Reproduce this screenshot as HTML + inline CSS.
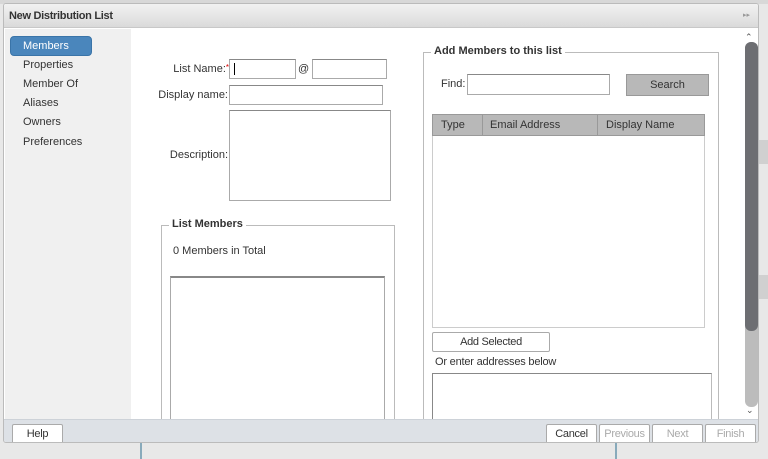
<!DOCTYPE html>
<html><head><style>
*{box-sizing:border-box;margin:0;padding:0}
body{width:768px;height:459px;overflow:hidden;background:#e8e8e8;font-family:"Liberation Sans",sans-serif;font-size:11px;color:#333;position:relative}
.a{position:absolute}
.inp{position:absolute;background:#fff;border:1px solid #aaa;border-top-color:#888}
.lbl{position:absolute;font-size:11px;color:#333;text-align:right}
.btn{position:absolute;background:#fff;border:1px solid #aaa;border-radius:2px;font-size:11px;text-align:center;color:#333;letter-spacing:-0.3px}
</style></head><body>
<div class="a" style="left:0;top:0;width:768px;height:4px;background:#d8d8d8"></div>
<div class="a" style="left:140px;top:443px;width:2px;height:16px;background:#8ab"></div>
<div class="a" style="left:615px;top:443px;width:2px;height:16px;background:#8ab"></div>
<div class="a" style="left:759px;top:140px;width:9px;height:24px;background:#d0d0d0"></div>
<div class="a" style="left:759px;top:275px;width:9px;height:24px;background:#d0d0d0"></div>
<!-- dialog -->
<div class="a" style="left:3px;top:3px;width:756px;height:440px;background:#fff;border:1px solid #bbb;border-radius:3px;overflow:hidden">
 <div class="a" style="left:0;top:0;width:756px;height:24px;background:linear-gradient(#f2f2f2,#dadada);border-bottom:1px solid #c8c8c8"></div>
 <div class="a" style="left:5px;top:6px;font-size:11px;font-weight:bold;color:#333;letter-spacing:-0.3px">New Distribution List</div>
 <div class="a" style="left:739px;top:7px;font-size:7px;color:#999">▸▸</div>
 <div class="a" style="left:1px;top:25px;width:126px;height:392px;background:#f0f0f0"></div>
 <div class="a" style="left:6px;top:32px;width:82px;height:20px;background:#4a86bc;border-radius:4px;border:1px solid #3a74a8"></div>
 <div class="a" style="left:19px;top:34px;color:#fff;line-height:16px">Members</div>
 <div class="a" style="left:19px;top:53px;line-height:16px;color:#333">Properties</div>
 <div class="a" style="left:19px;top:72px;line-height:16px">Member Of</div>
 <div class="a" style="left:19px;top:91px;line-height:16px">Aliases</div>
 <div class="a" style="left:19px;top:110px;line-height:16px">Owners</div>
 <div class="a" style="left:19px;top:130px;line-height:16px">Preferences</div>
 <!-- form -->
 <div class="lbl" style="left:120px;width:105px;top:59px">List Name:<span style="color:#d00;font-size:8px;vertical-align:top">*</span></div>
 <div class="inp" style="left:225px;top:55px;width:67px;height:20px"><div style="position:absolute;left:4px;top:3px;width:1px;height:12px;background:#000"></div></div>
 <div class="a" style="left:294px;top:59px">@</div>
 <div class="inp" style="left:308px;top:55px;width:75px;height:20px"></div>
 <div class="lbl" style="left:120px;width:104px;top:85px">Display name:</div>
 <div class="inp" style="left:225px;top:81px;width:154px;height:20px"></div>
 <div class="lbl" style="left:120px;width:104px;top:145px">Description:</div>
 <div class="inp" style="left:225px;top:106px;width:162px;height:91px"></div>
 <!-- list members -->
 <div class="a" style="left:157px;top:221px;width:234px;height:210px;border:1px solid #bbb"></div>
 <div class="a" style="left:165px;top:214px;background:#fff;padding:0 3px;font-weight:bold;font-size:11px">List Members</div>
 <div class="a" style="left:169px;top:241px">0 Members in Total</div>
 <div class="a" style="left:166px;top:272px;width:215px;height:160px;border:1px solid #aaa;border-top:2px solid #888"></div>
 <!-- add members -->
 <div class="a" style="left:419px;top:48px;width:296px;height:380px;border:1px solid #bbb"></div>
 <div class="a" style="left:427px;top:41px;background:#fff;padding:0 3px;font-weight:bold;font-size:11px">Add Members to this list</div>
 <div class="a" style="left:437px;top:74px">Find:</div>
 <div class="inp" style="left:463px;top:70px;width:143px;height:21px"></div>
 <div class="a" style="left:622px;top:70px;width:83px;height:22px;background:#b8b8b8;border:1px solid #999;text-align:center;line-height:20px">Search</div>
 <div class="a" style="left:428px;top:110px;width:273px;height:214px;border:1px solid #ccc"></div>
 <div class="a" style="left:428px;top:110px;width:273px;height:22px;background:#b8b8b8;border:1px solid #999"></div>
 <div class="a" style="left:437px;top:115px">Type</div>
 <div class="a" style="left:478px;top:111px;width:1px;height:20px;background:#999"></div>
 <div class="a" style="left:486px;top:115px">Email Address</div>
 <div class="a" style="left:593px;top:111px;width:1px;height:20px;background:#999"></div>
 <div class="a" style="left:602px;top:115px">Display Name</div>
 <div class="btn" style="left:428px;top:328px;width:118px;height:20px;line-height:18px">Add Selected</div>
 <div class="a" style="left:431px;top:352px;letter-spacing:-0.2px">Or enter addresses below</div>
 <div class="a" style="left:428px;top:369px;width:280px;height:60px;border:1px solid #888;border-right-color:#bbb"></div>
 <!-- scrollbar -->
 <div class="a" style="left:741px;top:28px;font-size:9px;color:#555">⌃</div>
 <div class="a" style="left:741px;top:38px;width:13px;height:365px;background:#bcbcbc;border-radius:6px"></div>
 <div class="a" style="left:741px;top:38px;width:13px;height:289px;background:#6d6e72;border-radius:6px"></div>
 <div class="a" style="left:742px;top:401px;font-size:9px;color:#555">⌄</div>
 <!-- footer -->
 <div class="a" style="left:0;top:415px;width:756px;height:25px;background:#dde1e6;border-top:1px solid #cdd2d8"></div>
 <div class="btn" style="left:8px;top:420px;width:51px;height:21px;line-height:19px">Help</div>
 <div class="btn" style="left:542px;top:420px;width:51px;height:21px;line-height:19px">Cancel</div>
 <div class="btn" style="left:595px;top:420px;width:51px;height:21px;line-height:19px;color:#aaa">Previous</div>
 <div class="btn" style="left:648px;top:420px;width:51px;height:21px;line-height:19px;color:#aaa">Next</div>
 <div class="btn" style="left:701px;top:420px;width:51px;height:21px;line-height:19px;color:#aaa">Finish</div>
</div>
</body></html>
